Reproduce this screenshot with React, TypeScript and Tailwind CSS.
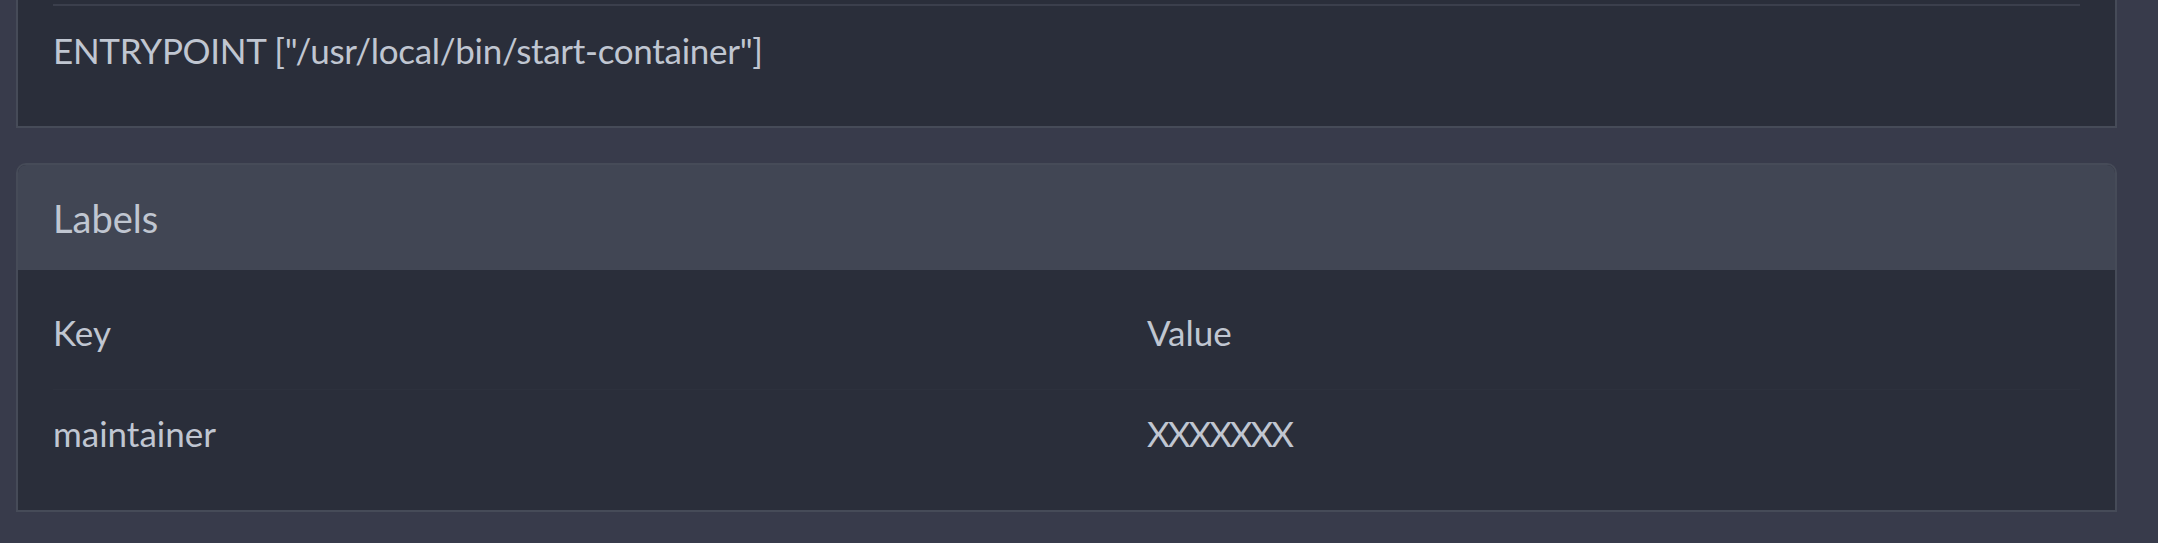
export default function App() {
  const font = { fontFamily: 'Lato, "Open Sans", sans-serif' };
  return (
    <div
      className="min-h-[543px] w-full bg-[#383b4b] pl-[16px] pr-[41px] text-[35px] leading-[54px] text-[#c0c6d1]"
      style={font}
    >
      {/* Dockerfile card (continues above the fold) */}
      <div className="border-x-2 border-b-2 border-[#464b58] bg-[#2a2e3a] px-[35px] pt-[4px] pb-[49px]">
        <div className="h-[2px] w-full bg-[#3b3f4c]" />
        <p className="mt-[17px] tracking-[-0.3px]">ENTRYPOINT ["/usr/local/bin/start-container"]</p>
      </div>

      {/* Labels card */}
      <div className="mt-[35px] rounded-t-[10px] border-2 border-[#464b58] bg-[#2a2e3a]">
        <div className="rounded-t-[8px] bg-[#414654] px-[35px] pt-[26px] pb-[25px]">
          <h3 className="text-[38px]">Labels</h3>
        </div>
        <div className="px-[35px] pt-[19px] pb-[20px]">
          <div className="grid h-[100px] grid-cols-[1094px_1fr] pt-[16px]">
            <span>Key</span>
            <span>Value</span>
          </div>
          <div className="grid h-[101px] grid-cols-[1094px_1fr] border-t border-[#2d313d] pt-[16px]">
            <span>maintainer</span>
            <span className="tracking-[-2px]">XXXXXXX</span>
          </div>
        </div>
      </div>
    </div>
  );
}
